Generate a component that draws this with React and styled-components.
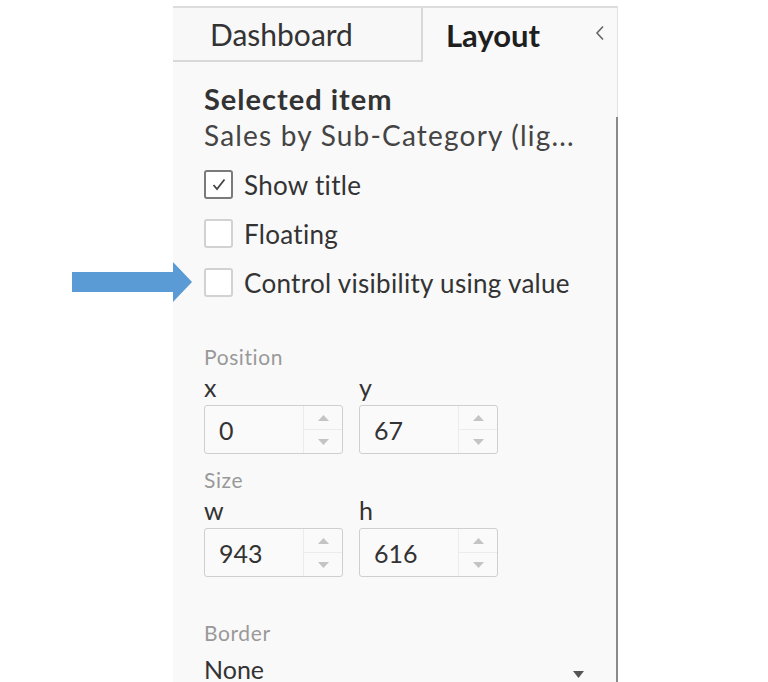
import React from 'react';
import styled, { createGlobalStyle } from 'styled-components';

const GlobalStyle = createGlobalStyle`
  html, body {
    margin: 0;
    padding: 0;
    background: #ffffff;
  }
  body {
    font-family: Lato, "Open Sans", sans-serif;
    overflow: hidden;
  }
`;

const Page = styled.div`
  display: flex;
  padding: 6px 0 0 173px;
  height: 682px;
  box-sizing: border-box;
`;

const Panel = styled.div`
  position: relative;
  width: 445px;
  height: 676px;
  box-sizing: border-box;
  background: #f9f9f9;
  border-top: 2px solid #dcdcdc;
  border-right: 1px solid #e2e2e2;
  display: flex;
  flex-direction: column;
`;

const Tabs = styled.div`
  display: flex;
  flex: none;
  height: 54px;
`;

const Tab = styled.div`
  display: flex;
  align-items: center;
  box-sizing: border-box;
  font-size: ${p => (p.active ? 31 : 30)}px;
  color: ${p => (p.active ? '#1f1f1f' : '#333')};
  font-weight: ${p => (p.active ? 700 : 400)};
  ${p => p.active
    ? 'flex: 1; padding-left: 23px;'
    : 'width: 250px; padding-left: 37px; border-right: 2px solid #d9d9d9; border-bottom: 2px solid #d9d9d9; background: #f8f8f8;'}
`;

const Collapse = styled.svg`
  margin-left: auto;
  margin-right: 12px;
  margin-bottom: 4px;
  width: 10px;
  height: 16px;
`;

const Body = styled.div`
  position: relative;
  flex: 1 0 auto;
  padding: 19px 0 0 31px;
`;

const ScrollThumb = styled.div`
  position: absolute;
  right: -1px;
  top: 55px;
  bottom: 0;
  width: 2px;
  background: #8a8a8a;
`;

const Heading = styled.div`
  font-size: 29px;
  font-weight: 700;
  letter-spacing: 1px;
  line-height: 36px;
  color: #333;
`;

const ItemName = styled.div`
  font-size: 28px;
  letter-spacing: 1.2px;
  line-height: 36px;
  color: #444;
  white-space: nowrap;
`;

const Options = styled.div`
  margin-top: 7px;
  display: flex;
  flex-direction: column;
`;

const OptionRow = styled.label`
  position: relative;
  display: flex;
  align-items: center;
  gap: 11px;
  height: 49px;
  font-size: 26px;
  letter-spacing: 0.3px;
  color: #333;
`;

const Box = styled.span`
  width: 29px;
  height: 29px;
  box-sizing: border-box;
  border: 2px solid ${p => (p.checked ? '#7a7a7a' : '#d2d2d2')};
  border-radius: 3px;
  background: #fff;
  display: flex;
  align-items: center;
  justify-content: center;
`;

const Pointer = styled.svg`
  position: absolute;
  left: -132px;
  top: 4px;
  width: 120px;
  height: 40px;
`;

const Section = styled.div`
  margin-top: ${p => p.gap || 0}px;
`;

const SectionLabel = styled.div`
  font-size: 21px;
  letter-spacing: 0.6px;
  line-height: 24px;
  color: #999;
`;

const Fields = styled.div`
  display: flex;
  gap: 16px;
`;

const Field = styled.div`
  display: flex;
  flex-direction: column;
`;

const FieldLabel = styled.div`
  font-size: 25px;
  line-height: 36px;
  height: 36px;
  color: #333;
`;

const Spin = styled.div`
  display: flex;
  width: 139px;
  height: 49px;
  box-sizing: border-box;
  border: 1px solid #cfcfcf;
  border-radius: 3px;
  background: #fafafa;
`;

const Value = styled.div`
  flex: 1;
  display: flex;
  align-items: center;
  padding-left: 14px;
  font-size: 25px;
  color: #333;
`;

const Steps = styled.div`
  width: 38px;
  border-left: 1px solid #ececec;
  display: flex;
  flex-direction: column;
`;

const Step = styled.div`
  flex: 1;
  display: flex;
  align-items: center;
  justify-content: center;
  & + & {
    border-top: 1px solid #ececec;
  }
`;

const Select = styled.div`
  display: flex;
  align-items: center;
  height: 44px;
  padding-right: 33px;
  font-size: 25px;
  color: #333;
  margin-top: 2px;
`;

const Caret = styled.svg`
  margin-left: auto;
  width: 11px;
  height: 7px;
  margin-top: 10px;
`;

const Tri = ({ down }) => (
  <svg width="11" height="6" viewBox="0 0 11 6">
    <path d={down ? 'M0 0 H11 L5.5 6 Z' : 'M0 6 H11 L5.5 0 Z'} fill="#c4c4c4" />
  </svg>
);

const Spinner = ({ label, value }) => (
  <Field>
    <FieldLabel>{label}</FieldLabel>
    <Spin>
      <Value>{value}</Value>
      <Steps>
        <Step><Tri /></Step>
        <Step><Tri down /></Step>
      </Steps>
    </Spin>
  </Field>
);

const Check = () => (
  <svg width="14" height="13" viewBox="0 0 14 13">
    <path d="M1.5 7 L5 11 L12.5 1.5" fill="none" stroke="#444" strokeWidth="1.8" />
  </svg>
);

const options = [
  { label: 'Show title', checked: true },
  { label: 'Floating' },
  { label: 'Control visibility using value', marked: true },
];

export default function App() {
  return (
    <>
      <GlobalStyle />
      <Page>
        <Panel>
          <Tabs>
            <Tab>Dashboard</Tab>
            <Tab active>
              Layout
              <Collapse viewBox="0 0 10 16">
                <path d="M8 1.5 L2 8 L8 14.5" fill="none" stroke="#666" strokeWidth="1.6" />
              </Collapse>
            </Tab>
          </Tabs>
          <Body>
            <ScrollThumb />
            <Heading>Selected item</Heading>
            <ItemName>Sales by Sub-Category (lig...</ItemName>
            <Options>
              {options.map(o => (
                <OptionRow key={o.label}>
                  {o.marked && (
                    <Pointer viewBox="0 0 120 40">
                      <path d="M0 10 H101 V0 L120 20 L101 40 V30 H0 Z" fill="#5b9bd5" />
                    </Pointer>
                  )}
                  <Box checked={o.checked}>{o.checked && <Check />}</Box>
                  {o.label}
                </OptionRow>
              ))}
            </Options>
            <Section gap={38}>
              <SectionLabel>Position</SectionLabel>
              <Fields>
                <Spinner label="x" value="0" />
                <Spinner label="y" value="67" />
              </Fields>
            </Section>
            <Section gap={14}>
              <SectionLabel>Size</SectionLabel>
              <Fields>
                <Spinner label="w" value="943" />
                <Spinner label="h" value="616" />
              </Fields>
            </Section>
            <Section gap={44}>
              <SectionLabel>Border</SectionLabel>
              <Select>
                None
                <Caret viewBox="0 0 11 7">
                  <path d="M0 0 H11 L5.5 7 Z" fill="#555" />
                </Caret>
              </Select>
            </Section>
          </Body>
        </Panel>
      </Page>
    </>
  );
}
